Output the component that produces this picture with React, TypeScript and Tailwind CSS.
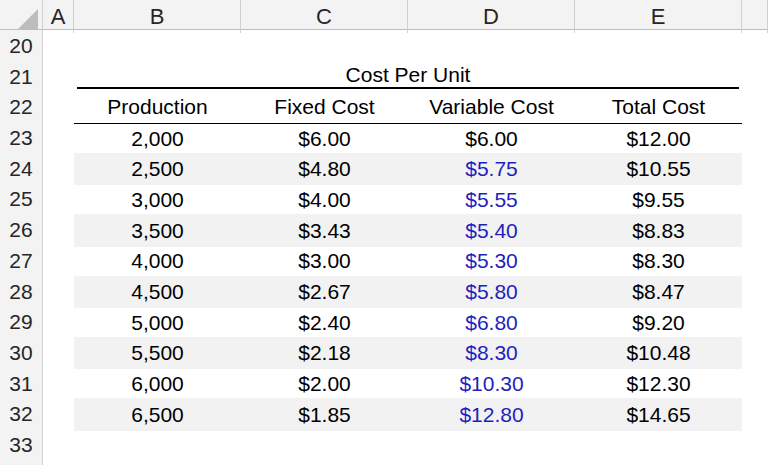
import React from 'react';

const rows = [
  ['2,000', '$6.00', '$6.00', '$12.00', false],
  ['2,500', '$4.80', '$5.75', '$10.55', true],
  ['3,000', '$4.00', '$5.55', '$9.55', true],
  ['3,500', '$3.43', '$5.40', '$8.83', true],
  ['4,000', '$3.00', '$5.30', '$8.30', true],
  ['4,500', '$2.67', '$5.80', '$8.47', true],
  ['5,000', '$2.40', '$6.80', '$9.20', true],
  ['5,500', '$2.18', '$8.30', '$10.48', true],
  ['6,000', '$2.00', '$10.30', '$12.30', true],
  ['6,500', '$1.85', '$12.80', '$14.65', true],
] as const;

const cols = 'grid grid-cols-[43px_31px_167px_167px_167px_167px_1fr]';

function RowNum({ n }: { n?: number }) {
  return (
    <div className="flex h-full items-center justify-center border-r border-b border-[#d0d0d0] bg-[#f3f3f3] text-[21px] text-[#262626]">
      {n}
    </div>
  );
}

export default function App() {
  return (
    <div className="h-[465px] w-[768px] overflow-hidden bg-white text-[21px] text-black" style={{ fontFamily: '"Liberation Sans", Arial, sans-serif' }}>
      {/* column headers */}
      <div className={`${cols} h-[30px] border-b border-[#bdbdbd] bg-[#f3f3f3] text-[22px] text-[#262626]`}>
        <div className="relative border-r border-[#d0d0d0]">
          <svg className="absolute right-[4px] bottom-[4px]" width="20" height="20"><polygon points="20,0 20,20 0,20" fill="#bdbdbd" /></svg>
        </div>
        {['A', 'B', 'C', 'D', 'E', ''].map((c, i) => (
          <div key={i} className="flex items-center justify-center border-r border-[#d0d0d0]">{c}</div>
        ))}
      </div>

      <div className={`${cols} h-[30.7px]`}><RowNum n={20} /></div>

      <div className={`${cols} h-[30.7px]`}>
        <RowNum n={21} />
        <div />
        <div className="col-span-4 mx-[3px] mb-[4px] flex items-end justify-center border-b-2 border-black leading-[24px]">
          Cost Per Unit
        </div>
      </div>

      <div className={`${cols} h-[30.7px]`}>
        <RowNum n={22} />
        <div />
        <div className="col-span-4 grid grid-cols-4 border-b border-black">
          {['Production', 'Fixed Cost', 'Variable Cost', 'Total Cost'].map((h) => (
            <div key={h} className="flex items-center justify-center">{h}</div>
          ))}
        </div>
      </div>

      {rows.map((r, i) => (
        <div key={i} className={`${cols} h-[30.7px]`}>
          <RowNum n={23 + i} />
          <div />
          <div className={`col-span-4 grid grid-cols-4 ${i % 2 === 1 ? 'bg-[#f2f2f2]' : ''}`}>
            <div className="flex items-center justify-center">{r[0]}</div>
            <div className="flex items-center justify-center">{r[1]}</div>
            <div className={`flex items-center justify-center ${r[4] ? 'text-[#1f1fbf]' : ''}`}>{r[2]}</div>
            <div className="flex items-center justify-center">{r[3]}</div>
          </div>
        </div>
      ))}

      <div className={`${cols} h-[30.7px]`}><RowNum n={33} /></div>
      <div className={`${cols} h-[30.7px]`}><RowNum /></div>
    </div>
  );
}
